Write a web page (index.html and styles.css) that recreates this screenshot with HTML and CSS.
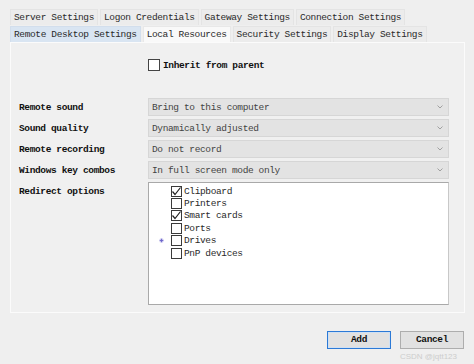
FILE: index.html
```html
<!DOCTYPE html>
<html>
<head>
<meta charset="utf-8">
<link rel="stylesheet" href="styles.css">
</head>
<body>
<div class="window">
  <div class="tabs">
    <div class="tab-row">
      <div class="tab">Server Settings</div>
      <div class="tab">Logon Credentials</div>
      <div class="tab">Gateway Settings</div>
      <div class="tab">Connection Settings</div>
    </div>
    <div class="tab-row">
      <div class="tab hover">Remote Desktop Settings</div>
      <div class="tab active">Local Resources</div>
      <div class="tab">Security Settings</div>
      <div class="tab">Display Settings</div>
    </div>
  </div>
  <div class="panel">
    <div class="inherit"><span class="cb big"></span><span class="inherit-text">Inherit from parent</span></div>
    <div class="form">
      <div class="label">Remote sound</div>
      <div class="select"><span>Bring to this computer</span><svg class="chev" width="6" height="4" viewBox="0 0 6 4"><path d="M0.5 0.5 L3 3 L5.5 0.5" fill="none" stroke="#a0a0a0" stroke-width="1"/></svg></div>
      <div class="label">Sound quality</div>
      <div class="select"><span>Dynamically adjusted</span><svg class="chev" width="6" height="4" viewBox="0 0 6 4"><path d="M0.5 0.5 L3 3 L5.5 0.5" fill="none" stroke="#a0a0a0" stroke-width="1"/></svg></div>
      <div class="label">Remote recording</div>
      <div class="select"><span>Do not record</span><svg class="chev" width="6" height="4" viewBox="0 0 6 4"><path d="M0.5 0.5 L3 3 L5.5 0.5" fill="none" stroke="#a0a0a0" stroke-width="1"/></svg></div>
      <div class="label">Windows key combos</div>
      <div class="select"><span>In full screen mode only</span><svg class="chev" width="6" height="4" viewBox="0 0 6 4"><path d="M0.5 0.5 L3 3 L5.5 0.5" fill="none" stroke="#a0a0a0" stroke-width="1"/></svg></div>
      <div class="label top">Redirect options</div>
      <div class="list">
        <div class="item"><span class="slot"></span><span class="cb"><svg width="11" height="11" viewBox="0 0 11 11"><path d="M1.5 5.5 L4 8.5 L9.5 1.5" fill="none" stroke="#222" stroke-width="1.2"/></svg></span><span>Clipboard</span></div>
        <div class="item"><span class="slot"></span><span class="cb"></span><span>Printers</span></div>
        <div class="item"><span class="slot"></span><span class="cb"><svg width="11" height="11" viewBox="0 0 11 11"><path d="M1.5 5.5 L4 8.5 L9.5 1.5" fill="none" stroke="#222" stroke-width="1.2"/></svg></span><span>Smart cards</span></div>
        <div class="item"><span class="slot"></span><span class="cb"></span><span>Ports</span></div>
        <div class="item"><span class="slot"><svg width="5" height="5" viewBox="0 0 5 5"><circle cx="2.5" cy="2.5" r="2.2" fill="#c9c6ee"/><path d="M2.5 0.8 V4.2 M0.8 2.5 H4.2" stroke="#6a63c8" stroke-width="0.9"/></svg></span><span class="cb"></span><span>Drives</span></div>
        <div class="item"><span class="slot"></span><span class="cb"></span><span>PnP devices</span></div>
      </div>
    </div>
  </div>
  <div class="footer">
    <button class="btn primary">Add</button>
    <button class="btn">Cancel</button>
  </div>
  <div class="watermark">CSDN @jqtt123</div>
</div>
</body>
</html>
```

FILE: styles.css
```css
* { box-sizing: border-box; }
html, body { margin: 0; padding: 0; }
body {
  background: #efefef;
  font-family: "Liberation Mono", "DejaVu Sans Mono", monospace;
  font-size: 9.5px;
  letter-spacing: -0.37px;
  color: #222;
  width: 474px;
  height: 364px;
  overflow: hidden;
}
.window {
  padding: 9px 9px 0 10px;
}
.tabs { display: flex; flex-direction: column; gap: 1px; }
.tab-row { display: flex; gap: 2px; height: 16px; }
.tab {
  height: 16px;
  line-height: 15px;
  padding: 0 3px;
  border: 1px solid #e4e4e4;
  border-bottom: none;
  background: #ececec;
  color: #2a2a2a;
  white-space: nowrap;
}
.tab.hover { background: #d9e5f2; border-color: #d2deec; }
.tab.active { background: #f9f9f9; border-color: #e8e8e8; }
.panel {
  height: 271px;
  border: 1px solid #fbfbfb;
  background: #f0f0f0;
  padding: 16px 15px 7px 8px;
}
.inherit {
  display: flex;
  align-items: center;
  gap: 3px;
  height: 12px;
  margin-left: 129px;
}
.inherit-text { font-weight: bold; color: #111; }
.cb {
  width: 11px;
  height: 11px;
  border: 1px solid #3a3a3a;
  background: #fff;
  display: inline-flex;
  flex: none;
  position: relative;
}
.cb svg { position: absolute; left: -1px; top: -1px; }
.cb.big { width: 12px; height: 12px; border-color: #444; }
.form {
  margin-top: 27px;
  display: grid;
  grid-template-columns: 129px 1fr;
  row-gap: 3px;
}
.label {
  font-weight: bold;
  color: #111;
  display: flex;
  align-items: center;
  height: 18px;
}
.label.top { align-items: flex-start; padding-top: 4px; }
.select {
  height: 18px;
  background: #e3e3e3;
  border: 1px solid #d6d6d6;
  display: flex;
  align-items: center;
  justify-content: space-between;
  padding: 0 5px 0 3px;
  color: #444;
}
.chev { flex: none; }
.list {
  height: 123px;
  background: #fff;
  border: 1px solid #a9a9a9;
  border-right-color: #c8c8c8;
  padding: 2px 0 0 8px;
}
.item {
  display: flex;
  align-items: center;
  height: 12.4px;
  color: #2a2a2a;
}
.item .cb { margin-right: 2px; }
.slot {
  width: 14px;
  flex: none;
  display: flex;
  align-items: center;
  padding-left: 2px;
}
.footer {
  display: flex;
  justify-content: flex-end;
  gap: 9px;
  margin-top: 18px;
  margin-right: 1px;
}
.btn {
  font: inherit;
  letter-spacing: inherit;
  font-weight: bold;
  color: #111;
  width: 64px;
  height: 18px;
  padding: 0;
  background: #e1e1e1;
  border: 1px solid #adadad;
  line-height: 16px;
}
.btn.primary { border-color: #2b79d6; box-shadow: inset 0 0 0 1px #cfe0f3; }
.watermark {
  margin-top: 3px;
  text-align: right;
  font-family: "Liberation Sans", Arial, sans-serif;
  letter-spacing: 0;
  font-size: 8px;
  line-height: 10px;
  color: #cdcdcd;
  padding-right: 8px;
}
```
